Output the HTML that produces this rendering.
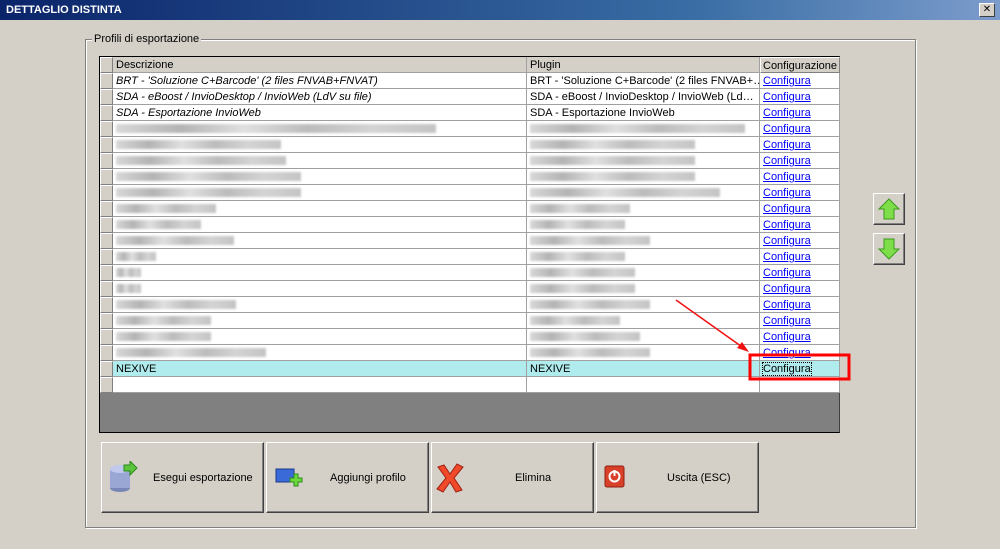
<!DOCTYPE html>
<html><head><style>
*{margin:0;padding:0;box-sizing:border-box}
body{width:1000px;height:549px;background:#d4d0c8;font-family:"Liberation Sans",sans-serif;font-size:11px;position:relative;overflow:hidden}
.abs{position:absolute}
.title{left:0;top:0;width:1000px;height:20px;background:linear-gradient(90deg,#0a246a 0%,#3a6ea5 70%,#7c9ccc 100%);color:#fff;font-weight:bold;font-size:11px;padding:4px 0 0 6px}
.close{left:979px;top:3px;width:16px;height:14px;background:#d4d0c8;border:1px solid;border-color:#fff #404040 #404040 #fff;font-size:10px;line-height:11px;text-align:center;color:#000}
.grp{left:85px;top:39px;width:831px;height:489px;border:1px solid #808080;box-shadow:1px 1px 0 #fff inset,1px 1px 0 #fff}
.grpl{left:92px;top:33px;background:#d4d0c8;padding:0 2px;font-size:11px}
.grid{left:99px;top:56px;width:741px;height:377px;background:#808080;border:1px solid #000;border-right-color:#404040}
.cell{position:absolute;height:16px;border-right:1px solid #a0a0a0;border-bottom:1px solid #a0a0a0;background:#fff;padding:2px 0 0 3px;white-space:nowrap;overflow:hidden;font-size:11px}
.sel{background:#d4d0c8;border:1px solid;border-color:#fff #808080 #808080 #fff}
.hd{background:#d4d0c8}
a{color:#00f;text-decoration:underline}
.bl{display:inline-block;height:9px;background:linear-gradient(90deg,#d8d8d8,#b4b4b4 20%,#e0e0e0 40%,#bcbcbc 60%,#d4d4d4 80%,#c4c4c4);filter:blur(1px);margin-top:1px}
.btn{top:442px;width:163px;height:71px;background:#d4d0c8;border:1px solid;border-color:#fff #404040 #404040 #fff;box-shadow:inset -1px -1px 0 #808080}
.btn span{position:absolute;top:29px;font-size:11px;white-space:nowrap}
.sb{left:873px;width:32px;height:32px;background:#d4d0c8;border:1px solid;border-color:#fff #404040 #404040 #fff;box-shadow:inset -1px -1px 0 #808080}
</style></head><body>
<div class="abs title">DETTAGLIO DISTINTA</div>
<div class="abs close">✕</div>
<div class="abs grp"></div>
<div class="abs grpl">Profili di esportazione</div>
<div class="abs grid" id="g"></div>
<div class="abs sb" style="top:193px"><svg width="30" height="30"><path d="M15 5 L25 15 L20 15 L20 25 L10 25 L10 15 L5 15Z" fill="#7ede4a" stroke="#3a9a1a"/></svg></div>
<div class="abs sb" style="top:233px"><svg width="30" height="30"><path d="M15 25 L25 15 L20 15 L20 5 L10 5 L10 15 L5 15Z" fill="#7ede4a" stroke="#3a9a1a"/></svg></div>
<div class="abs btn" style="left:101px"><svg class="abs" style="left:6px;top:18px" width="30" height="32"><ellipse cx="12" cy="27" rx="10" ry="4" fill="#7a86b8"/><rect x="2" y="8" width="20" height="19" fill="#9aa6d4"/><ellipse cx="12" cy="8" rx="10" ry="4" fill="#c0c8ee"/><path d="M16 4h6v-4l7 7-7 7v-4h-6z" fill="#5cc43a" stroke="#2a8a1a"/></svg><span style="left:51px">Esegui esportazione</span></div>
<div class="abs btn" style="left:266px"><svg class="abs" style="left:8px;top:22px" width="28" height="26"><rect x="1" y="4" width="18" height="13" fill="#3a6ad8" stroke="#1a3a8a"/><path d="M15 13h4v-4h4v4h4v4h-4v4h-4v-4h-4z" fill="#6cd83a" stroke="#2a8a1a"/></svg><span style="left:63px">Aggiungi profilo</span></div>
<div class="abs btn" style="left:431px"><svg class="abs" style="left:3px;top:20px" width="30" height="30"><path d="M3 4 L9 2 L15 11 L22 1 L28 4 L19 15 L27 27 L21 29 L15 19 L8 29 L2 26 L11 15Z" fill="#f04a2a" stroke="#a02010"/></svg><span style="left:83px">Elimina</span></div>
<div class="abs btn" style="left:596px"><svg class="abs" style="left:7px;top:22px" width="22" height="24"><rect x="1" y="1" width="19" height="21" rx="2" fill="#d8402a" stroke="#902010"/><circle cx="10.5" cy="11.5" r="5" fill="none" stroke="#fff" stroke-width="2"/><line x1="10.5" y1="5" x2="10.5" y2="11" stroke="#fff" stroke-width="2"/></svg><span style="left:70px">Uscita (ESC)</span></div>
<svg class="abs" style="left:0;top:0" width="1000" height="549">
<line x1="676" y1="300" x2="745" y2="349" stroke="#f01010" stroke-width="1.5"/>
<path d="M749 352 L737 348 L742 342Z" fill="#f01010"/>
<rect x="750" y="355" width="99" height="24" fill="none" stroke="#f00" stroke-width="3"/>
</svg>
<script>
var g=document.getElementById('g'),h='';
function c(l,t,w,cls,txt,st){h+='<div class="cell '+cls+'" style="left:'+l+'px;top:'+t+'px;width:'+w+'px;'+(st||'')+'">'+txt+'</div>';}
c(0,0,13,'sel','');c(13,0,414,'hd','Descrizione');c(427,0,233,'hd','Plugin');c(660,0,80,'hd sel','Configurazione','padding-left:2px');
var d=[['<i>BRT - \'Soluzione C+Barcode\' (2 files FNVAB+FNVAT)</i>','BRT - \'Soluzione C+Barcode\' (2 files FNVAB+…'],['<i>SDA - eBoost / InvioDesktop / InvioWeb (LdV su file)</i>','SDA - eBoost / InvioDesktop / InvioWeb (Ld…'],['<i>SDA - Esportazione InvioWeb</i>','SDA - Esportazione InvioWeb']];
var bw=[[320,215],[165,165],[170,165],[185,165],[185,190],[100,100],[85,95],[118,120],[40,95],[25,105],[25,105],[120,120],[95,90],[95,110],[150,120]];
for(var i=0;i<bw.length;i++)d.push(['<span class="bl" style="width:'+bw[i][0]+'px"></span>','<span class="bl" style="width:'+bw[i][1]+'px"></span>']);
d.push(['NEXIVE','NEXIVE']);d.push(['','']);
for(var i=0;i<d.length;i++){var t=16+i*16,bg=i==18?'background:#b0eced':'';
c(0,t,13,'sel','');c(13,t,414,'',d[i][0],bg);c(427,t,233,'',d[i][1],bg);
var cf=i<18?'<a>Configura</a>':(i==18?'<span style="outline:1px dotted #000">Configura</span>':'');
c(660,t,80,'',cf,bg);}
g.innerHTML=h;
</script>
</body></html>
